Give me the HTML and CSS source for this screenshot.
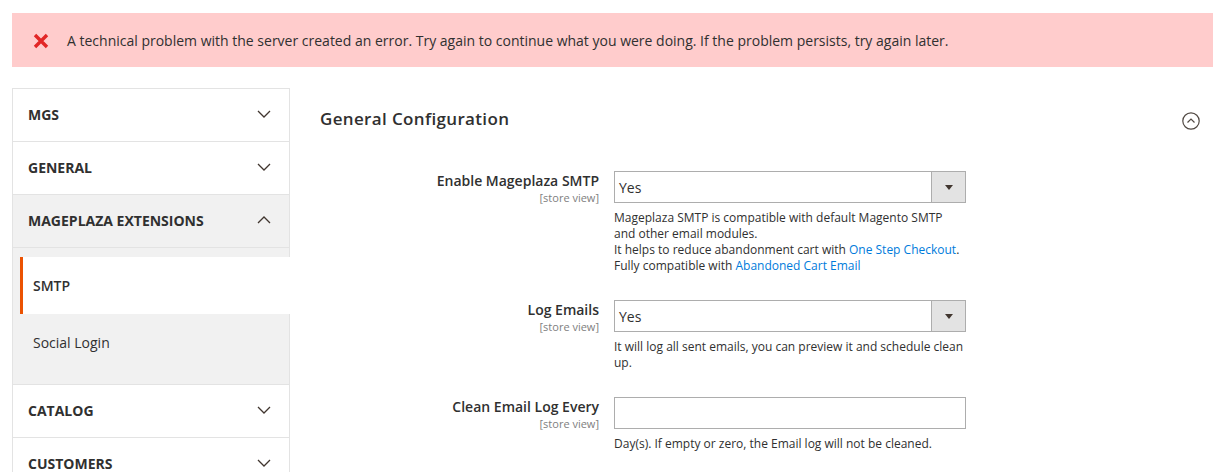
FILE: index.html
```html
<!DOCTYPE html>
<html>
<head>
<meta charset="utf-8">
<link rel="stylesheet" href="styles.css">
</head>
<body>
<div class="message-error">
  <svg class="x-icon" width="16" height="16" viewBox="0 0 16 16"><path d="M2 2 L14 14 M14 2 L2 14" stroke="#e22626" stroke-width="3.4" stroke-linecap="butt"/></svg>
  <span>A technical problem with the server created an error. Try again to continue what you were doing. If the problem persists, try again later.</span>
</div>
<div class="page">
  <aside class="nav">
    <div class="nav-title">MGS<svg class="chev" width="14" height="8" viewBox="0 0 14 8"><polyline points="1,1 7,7 13,1" fill="none" stroke="#41362f" stroke-width="1.3"/></svg></div>
    <div class="nav-title">GENERAL<svg class="chev" width="14" height="8" viewBox="0 0 14 8"><polyline points="1,1 7,7 13,1" fill="none" stroke="#41362f" stroke-width="1.3"/></svg></div>
    <div class="nav-title open">MAGEPLAZA EXTENSIONS<svg class="chev" width="14" height="8" viewBox="0 0 14 8"><polyline points="1,7 7,1 13,7" fill="none" stroke="#41362f" stroke-width="1.3"/></svg></div>
    <div class="nav-items">
      <div class="nav-item active">SMTP</div>
      <div class="nav-item">Social Login</div>
    </div>
    <div class="nav-title">CATALOG<svg class="chev" width="14" height="8" viewBox="0 0 14 8"><polyline points="1,1 7,7 13,1" fill="none" stroke="#41362f" stroke-width="1.3"/></svg></div>
    <div class="nav-title">CUSTOMERS<svg class="chev" width="14" height="8" viewBox="0 0 14 8"><polyline points="1,1 7,7 13,1" fill="none" stroke="#41362f" stroke-width="1.3"/></svg></div>
  </aside>
  <main class="content">
    <div class="section-head">
      <h2>General Configuration</h2>
      <svg class="collapse" width="20" height="20" viewBox="0 0 20 20"><circle cx="10" cy="10" r="8.2" fill="none" stroke="#514943" stroke-width="1.2"/><polyline points="6.5,11.5 10,8 13.5,11.5" fill="none" stroke="#514943" stroke-width="1.2"/></svg>
    </div>
    <div class="row r1">
      <div class="label"><span class="lt">Enable Mageplaza SMTP</span><span class="scope">[store view]</span></div>
      <div class="value">
        <div class="select"><span>Yes</span><span class="arrow"><i></i></span></div>
        <p class="note">Mageplaza SMTP is compatible with default Magento SMTP and other email modules.<br>It helps to reduce abandonment cart with <a>One Step Checkout</a>.<br>Fully compatible with <a>Abandoned Cart Email</a></p>
      </div>
    </div>
    <div class="row r2">
      <div class="label"><span class="lt">Log Emails</span><span class="scope">[store view]</span></div>
      <div class="value">
        <div class="select"><span>Yes</span><span class="arrow"><i></i></span></div>
        <p class="note">It will log all sent emails, you can preview it and schedule clean up.</p>
      </div>
    </div>
    <div class="row r3">
      <div class="label"><span class="lt">Clean Email Log Every</span><span class="scope">[store view]</span></div>
      <div class="value">
        <div class="input"></div>
        <p class="note">Day(s). If empty or zero, the Email log will not be cleaned.</p>
      </div>
    </div>
  </main>
</div>
</body>
</html>
```
FILE: styles.css
```css
* { box-sizing: border-box; }
html, body { margin: 0; padding: 0; background: #fff; overflow: hidden; }
body {
  font-family: "Open Sans", "Noto Sans", sans-serif;
  color: #303030;
  width: 1221px;
  height: 472px;
}
.message-error {
  margin: 13px 8px 0 12px;
  height: 54px;
  background: #fcc;
  display: flex;
  align-items: center;
  padding-left: 21px;
  font-size: 14px;
  color: #303030;
}
.x-icon { flex: none; margin-right: 18px; margin-top: 1px; }
.page {
  display: flex;
  margin: 21px 0 0 12px;
}
.nav {
  width: 278px;
  flex: none;
  border: 1px solid #e3e3e3;
  border-bottom: none;
}
.nav-title {
  height: 53px;
  border-bottom: 1px solid #e3e3e3;
  display: flex;
  align-items: center;
  justify-content: space-between;
  padding: 0 18px 2px 15px;
  font-size: 14px;
  font-weight: 700;
  color: #303030;
}
.nav-title.open { background: #f1f1f1; }
.chev { flex: none; }
.nav-items {
  background: #f1f1f1;
  padding: 9px 0 13px 7px;
  border-bottom: 1px solid #e3e3e3;
}
.nav-item {
  height: 57px;
  display: flex;
  align-items: center;
  padding-left: 13px;
  font-size: 14px;
  color: #303030;
}
.nav-item.active {
  background: #fff;
  border-left: 3px solid #eb5202;
  padding-left: 10px;
  margin-right: -2px;
  font-weight: 600;
}
.content {
  flex: 1;
  padding-left: 30px;
  padding-right: 20px;
}
.section-head {
  display: flex;
  align-items: center;
  justify-content: space-between;
  height: 62px;
}
.section-head h2 {
  margin: 0 0 2px;
  font-size: 17px;
  font-weight: 600;
  color: #303030;
  letter-spacing: 0.35px;
}
.collapse { margin-top: 3px; }
.row {
  display: flex;
}
.r1 { margin-top: 21px; }
.r2 { margin-top: 26px; }
.r3 { margin-top: 26px; }
.label {
  width: 279px;
  flex: none;
  display: flex;
  flex-direction: column;
  align-items: flex-end;
}
.lt { font-size: 14px; font-weight: 600; line-height: 19px; color: #303030; }
.scope { font-size: 11px; color: #808080; line-height: 15px; }
.value { width: 352px; margin-left: 15px; }
.select {
  height: 32px;
  border: 1px solid #adadad;
  display: flex;
  align-items: center;
  justify-content: space-between;
  font-size: 14px;
  padding-left: 4px;
}
.arrow {
  width: 34px;
  height: 100%;
  background: #e3e3e3;
  border-left: 1px solid #adadad;
  display: flex;
  align-items: center;
  justify-content: center;
}
.arrow i {
  width: 0; height: 0;
  border-left: 4px solid transparent;
  border-right: 4px solid transparent;
  border-top: 5px solid #41362f;
}
.input { height: 32px; border: 1px solid #adadad; }
.note {
  margin: 7px 0 0;
  font-size: 12px;
  line-height: 16px;
  color: #303030;
}
.note a { color: #007bdb; }
```
